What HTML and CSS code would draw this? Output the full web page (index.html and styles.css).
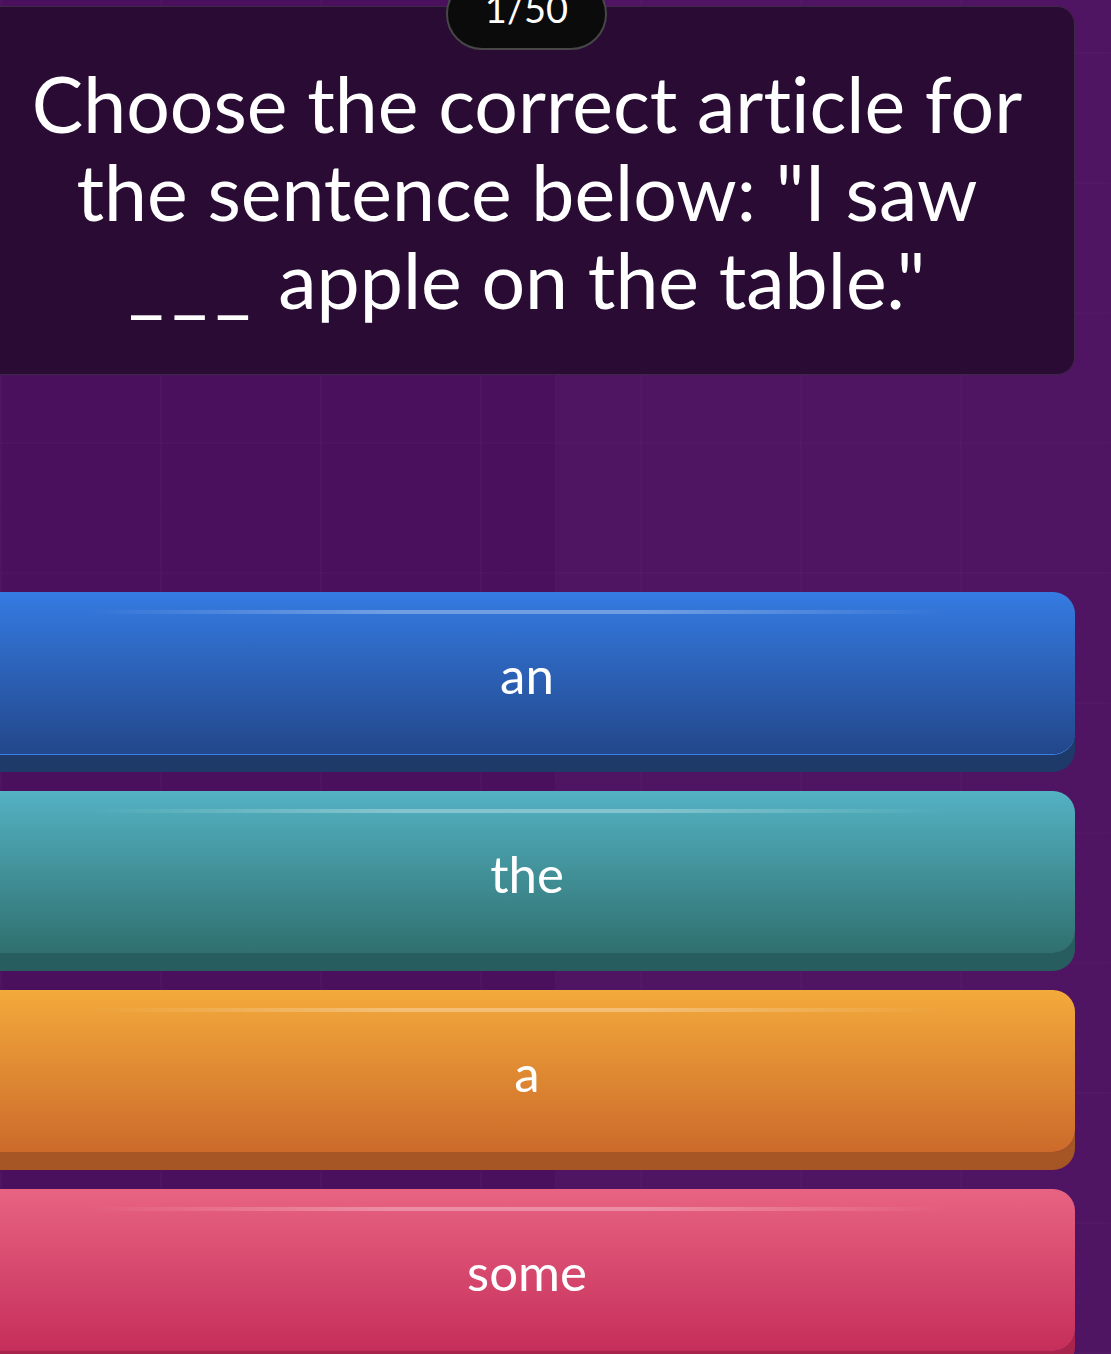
FILE: index.html
```html
<!DOCTYPE html>
<html>
<head>
<meta charset="utf-8">
<link rel="stylesheet" href="styles.css">
</head>
<body>
<div class="page">
  <div class="question-card">
    <div class="counter">1/50</div>
    <p class="question">Choose the correct article for<br>the sentence below: "I saw<br><span class="blank">___</span> apple on the table."</p>
  </div>
  <div class="options">
    <div class="option blue"><span class="shine"></span><span class="label">an</span></div>
    <div class="option teal"><span class="shine"></span><span class="label">the</span></div>
    <div class="option orange"><span class="shine"></span><span class="label">a</span></div>
    <div class="option pink"><span class="shine"></span><span class="label">some</span></div>
  </div>
</div>
</body>
</html>
```
FILE: styles.css
```css
html, body {
  margin: 0;
  padding: 0;
  height: 100%;
  overflow: hidden;
}
body {
  background-color: #4c1060;
  background-image:
    linear-gradient(90deg, rgba(0,0,0,0.03) 0 50%, rgba(255,255,255,0.015) 50% 100%),
    repeating-linear-gradient(90deg, rgba(255,255,255,0.02) 0 2px, transparent 2px 160px),
    repeating-linear-gradient(0deg, rgba(255,255,255,0.015) 0 2px, transparent 2px 130px);
  font-family: "Lato", "Noto Sans", sans-serif;
  font-variant-ligatures: none;
  color: #fff;
}
.page {
  width: 1096px;
  margin-left: -21px;
  padding-top: 6px;
}
.question-card {
  position: relative;
  height: 367px;
  background: #2a0b34;
  border: 1px solid #3d2847;
  border-radius: 18px;
  display: flex;
  align-items: center;
  justify-content: center;
}
.counter {
  position: absolute;
  left: 466px;
  top: -29px;
  width: 161px;
  height: 72px;
  box-sizing: border-box;
  background: #0b0b0b;
  border: 2px solid #474747;
  border-radius: 36px;
  font-size: 38px;
  line-height: 56px;
  text-align: center;
  color: #fff;
}
.question {
  margin: 0;
  font-size: 77px;
  line-height: 88px;
  text-align: center;
}
.blank {
  letter-spacing: 8px;
}
.options {
  margin-top: 217px;
  display: flex;
  flex-direction: column;
  gap: 37px;
}
.option {
  position: relative;
  height: 162px;
  border-radius: 0 22px 22px 0;
  display: flex;
  align-items: center;
  justify-content: center;
  font-size: 51px;
}
.option .label {
  position: relative;
  top: 1px;
}
.shine {
  position: absolute;
  left: 110px;
  right: 130px;
  top: 18px;
  height: 4px;
  background: linear-gradient(90deg, rgba(255,255,255,0), rgba(255,255,255,0.3) 35%, rgba(255,255,255,0.3) 65%, rgba(255,255,255,0));
}
.blue {
  background: linear-gradient(#357be2, #22478a);
  box-shadow: 0 1px 0 #3b80ea, 0 18px 0 #1d3a68;
}
.teal {
  background: linear-gradient(#53b2c3, #30706f);
  box-shadow: 0 18px 0 #285d5f;
}
.orange {
  background: linear-gradient(#f3aa3b, #cc6a2b);
  box-shadow: 0 18px 0 #a65524;
}
.pink {
  background: linear-gradient(#e86382, #c52e5a);
  box-shadow: 0 18px 0 #a9244c;
}
```
